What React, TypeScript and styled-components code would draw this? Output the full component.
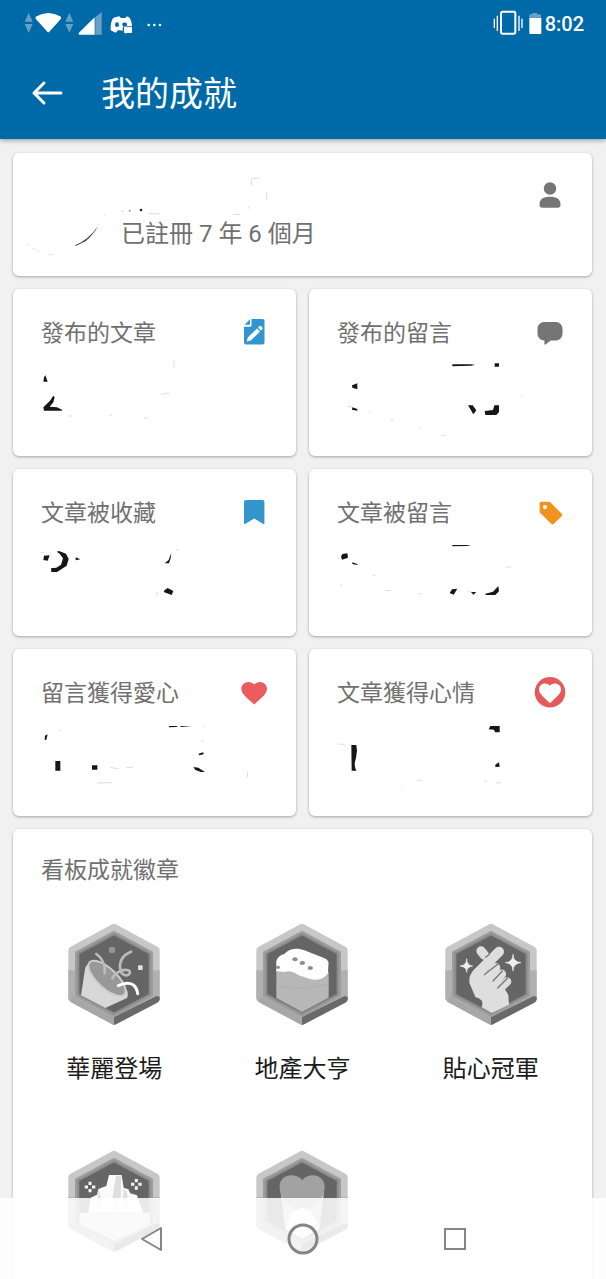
import React from "react";
import styled, { createGlobalStyle } from "styled-components";

const GlobalStyle = createGlobalStyle`
  * { box-sizing: border-box; }
  body {
    margin: 0;
    background: #f1f1f1;
    font-family: "Noto Sans CJK TC", Roboto, sans-serif;
  }
  button { font: inherit; }
`;

const Screen = styled.div`
  position: relative;
  display: flex;
  flex-direction: column;
  height: 100vh;
  overflow: hidden;
  background: #f1f1f1;
`;

const Header = styled.header`
  flex: none;
  color: #fff;
  background: #006aa8;
  box-shadow: 0 1px 5px rgba(0, 0, 0, 0.4);
  z-index: 1;
`;

const StatusBar = styled.div`
  display: flex;
  align-items: center;
  justify-content: space-between;
  height: 48px;
  padding: 0 22px 0 24px;
`;

const StatusGroup = styled.div`
  display: flex;
  align-items: center;
  gap: 3px;
`;

const Clock = styled.time`
  font: 500 20px/24px Roboto, sans-serif;
`;

const Toolbar = styled.div`
  display: flex;
  align-items: center;
  gap: 38px;
  height: 91px;
  padding: 0 32px 0 31px;
`;

const BackButton = styled.button`
  display: flex;
  width: 32px;
  height: 32px;
  padding: 0;
  border: 0;
  color: inherit;
  background: none;
`;

const Title = styled.h1`
  margin: 0;
  padding-bottom: 4px;
  font-size: 34px;
  line-height: 48px;
  font-weight: 400;
`;

const Content = styled.main`
  flex: 1;
  min-height: 0;
  display: flex;
  flex-direction: column;
  gap: 13px;
  padding: 14px 14px 0 13px;
  overflow-y: auto;
  scrollbar-width: none;
`;

const Card = styled.section`
  flex: none;
  border-radius: 6px;
  background: #fff;
  box-shadow: 0 1px 3px rgba(0, 0, 0, 0.32);
`;

const ProfileCard = styled(Card)`
  display: flex;
  align-items: flex-start;
  height: 123px;
  padding: 12px 26px 0 14px;
`;

const ProfileText = styled.div`
  flex: 1;
  margin-left: 12px;
`;

const Caption = styled.h2`
  margin: 0;
  padding-bottom: 2px;
  color: #707070;
  font-size: 23px;
  line-height: 34px;
  font-weight: 400;
  white-space: nowrap;
`;

const ProfileCaption = styled(Caption)`
  font-family: Roboto, "Noto Sans CJK TC", sans-serif;
  font-size: 24px;
`;

const IconSlot = styled.span<{ $color: string }>`
  flex: none;
  display: flex;
  color: ${(p) => p.$color};
`;

const ProfileIcon = styled(IconSlot)`
  padding-top: 14px;
`;

const StatGrid = styled.div`
  flex: none;
  display: grid;
  grid-template-columns: 1fr 1fr;
  gap: 13px;
`;

const StatCard = styled(Card)`
  height: 167px;
  padding: 26px 26px 0 28px;
`;

const StatHead = styled.div`
  display: flex;
  align-items: center;
  justify-content: space-between;
  height: 34px;
  margin-bottom: 6px;
`;

const Drawing = styled.svg`
  display: block;
  flex: none;
`;

const BadgeCard = styled(Card)`
  padding: 22px 7px 120px;
`;

const BadgeTitle = styled(Caption)`
  padding-left: 21px;
`;

const BadgeGrid = styled.ul`
  display: grid;
  grid-template-columns: repeat(3, 1fr);
  row-gap: 66px;
  margin: 36px 0 0;
  padding: 0;
  list-style: none;
`;

const BadgeItem = styled.li`
  display: flex;
  flex-direction: column;
  align-items: center;
  gap: 25px;
  color: #1b1b1b;
  font-size: 24px;
  line-height: 34px;
`;

const NavBar = styled.nav`
  position: absolute;
  inset: auto 0 0;
  z-index: 2;
  display: grid;
  grid-template-columns: repeat(3, 1fr);
  height: 81px;
  padding: 0 12.5%;
  background: rgba(255, 255, 255, 0.86);
`;

const NavButton = styled.button`
  display: flex;
  align-items: center;
  justify-content: center;
  padding: 0;
  border: 0;
  background: none;
`;

const HEART =
  "M12 21.35l-1.45-1.32C5.4 15.36 2 12.28 2 8.5 2 5.42 4.42 3 7.5 3c1.74 0 3.41.81 4.5 2.09C13.09 3.81 14.76 3 16.5 3 19.58 3 22 5.42 22 8.5c0 3.78-3.4 6.86-8.55 11.54z";

const icons = {
  edit: (
    <>
      <path d="M13.5 3H24.5a2 2 0 0 1 2 2V26.5a2 2 0 0 1-2 2H8a2 2 0 0 1-2-2V10.7H12a1.5 1.5 0 0 0 1.5-1.5z" fill="currentColor" />
      <path d="M6.5 8.8 12 3.2V8.8z" fill="currentColor" />
      <path d="M8.8 25.5 9.8 21.6 19 12.4 22 15.4 12.8 24.6zM20 11.4 21.5 10a1 1 0 0 1 1.4 0L24.4 11.5a1 1 0 0 1 0 1.4L23 14.4z" fill="#fff" />
    </>
  ),
  comment: (
    <path d="M10 6H22a6.5 6.5 0 0 1 6.5 6.5V18a6.5 6.5 0 0 1-6.5 6.5H16.8L11.5 28.6a.7.7 0 0 1-1.1-.6V24.5H10A6.5 6.5 0 0 1 3.5 18V12.5A6.5 6.5 0 0 1 10 6z" fill="currentColor" />
  ),
  bookmark: <path d="M8 4H24.4a2 2 0 0 1 2 2V27.5a.7.7 0 0 1-1 .6L16.2 22.6 7 28.1a.7.7 0 0 1-1-.6V6a2 2 0 0 1 2-2z" fill="currentColor" />,
  tag: (
    <path
      d="M7.3 5.8H14.6a3 3 0 0 1 2.2 1L27.5 17.5a2 2 0 0 1 0 2.8L20 27.8a2 2 0 0 1-2.8 0L6.6 17.2a3 3 0 0 1-1-2.2V7.5A1.7 1.7 0 0 1 7.3 5.8zM11 9a2.1 2.1 0 1 0 0 4.2A2.1 2.1 0 0 0 11 9z"
      fillRule="evenodd"
      fill="currentColor"
    />
  ),
  heart: <path d={HEART} transform="translate(.8 2.4) scale(1.28 1.22)" fill="currentColor" />,
  mood: (
    <>
      <circle cx="16" cy="16.2" r="15.3" fill="currentColor" />
      <path d={HEART} transform="translate(2.8 4.2) scale(1.1 1.07)" fill="#fff" />
    </>
  ),
  person: (
    <>
      <circle cx="16" cy="9.5" r="6.2" fill="currentColor" />
      <path d="M5.5 25.5C5.5 20 9.5 17.8 16 17.8S26.5 20 26.5 25.5A3 3 0 0 1 23.5 28.7H8.5a3 3 0 0 1-3-3.2z" fill="currentColor" />
    </>
  ),
};

const Icon = ({ name }: { name: keyof typeof icons }) => (
  <Drawing width="32" height="32" viewBox="0 0 32 32" aria-hidden="true">
    {icons[name]}
  </Drawing>
);

/* Each value is mostly erased: only specks of ink are left. */
type Stat = { label: string; icon: keyof typeof icons; color: string; ink: string; faint: string };

const stats: Stat[] = [
  {
    label: "發布的文章", icon: "edit", color: "#3295cd",
    ink: "M13 61 20 80H7L9 67ZM37 122 41 127 37 142 26 155 48 157 63 164V167H9L7 157 27 137Z",
    faint: "M399 16V38M360 118 384 114M81 183H94M205 181 215 179M310 188 320 189",
  },
  {
    label: "發布的留言", icon: "comment", color: "#757575",
    ink: "M45 91 61 85V103L46 98ZM46 157 61 162V167L45 164ZM346 28H404L414 30 400 32 346 34ZM473 25H486V35H473ZM393 151H407L418 166 409 178ZM443 168 468 165 472 151H486V171L478 180H445Z",
    faint: "M31 153 45 157M96 170 101 174M165 192V200M247 219 253 221M312 240 326 243M553 120V126",
  },
  {
    label: "文章被收藏", icon: "bookmark", color: "#3295cd",
    ink: "M9 62 26 61 20 77 7 75ZM47 50 54 48 75 56 83 72 77 92 61 103 48 111H31L30 100 46 98 60 89 66 70 56 56ZM104 67 118 73 104 76ZM391 53 389 70 384 85H371L383 75ZM371 165 380 159 397 168 392 180 368 171Z",
    faint: "M0 52 10 53M403 47 414 44M348 170V181",
  },
  {
    label: "文章被留言", icon: "tag", color: "#f0921e",
    ink: "M16 57 31 55 33 68 15 74 12 65ZM46 82 61 87V90L46 87ZM346 30H402L390 33 346 34ZM345 163 361 161 350 179 338 174ZM402 171H418L409 179ZM445 176 468 170 484 153 486 169 475 180H446Z",
    faint: "M107 120 115 122M145 166 162 167M10 150 16 150M241 177 253 176M392 170 403 171M506 96 523 96",
  },
  {
    label: "留言獲得愛心", icon: "heart", color: "#ec5b5d",
    ink: "M12 62 20 58 16 74 11 75ZM43 138H58V167H43ZM153 151H169V164H153ZM384 33H411L406 36 384 37ZM417 33H453L420 36ZM473 116 487 112 488 118 474 121ZM457 156 472 158 492 171 480 171 463 165Z",
    faint: "M54 47 60 45M487 33 492 34M481 77 489 80M209 157 225 161 234 161M257 158 278 156M168 204 213 203M620 169V188",
  },
  {
    label: "文章獲得心情", icon: "mood", color: "#e45a5c",
    ink: "M43 90H58L60 107 57 128 53 145 54 157 58 167H44ZM460 33H488V52H474L471 44 455 43ZM475 149 486 142 488 155 475 156Z",
    faint: "M4 87 24 88M190 210V213M240 197 255 195M441 199H450M475 203 492 204",
  },
];

const hex = (inset: number) => {
  const x = inset, r = 276 - inset, t = inset * 1.1, b = 306 - inset * 1.1;
  const u = 76 + inset * 0.5, l = 230 - inset * 0.5;
  return `M138 ${t}L${r} ${u}V${l}L138 ${b}L${x} ${l}V${u}Z`;
};

const Badge = ({ label, children }: { label: string; children: React.ReactNode }) => (
  <Drawing width="92" height="102" viewBox="0 0 276 306" role="img" aria-label={label}>
    <path d={hex(12)} fill="#c7c7c7" stroke="#c7c7c7" strokeWidth="22" strokeLinejoin="round" />
    <path d="M1 142H275V226Q275 232 269 236L144 304Q138 307 132 304L7 236Q1 232 1 226Z" fill="#b0b0b0" />
    <path d="M138 282 266 219 275 222V230Q275 235 268 239L144 304L138 306Z" fill="#696969" />
    <path d="M138 284V306L8 237 15 220Z" fill="#a7a7a7" />
    <path d={hex(21)} fill="#9d9d9d" />
    <path d={hex(28)} fill="#8c8c8c" />
    <path d={hex(34)} fill="#656565" />
    {children}
  </Drawing>
);

const party = (
  <>
    <path d="M51 139Q53 120 77 120L175 199Q183 210 177 225L112 255 39 217Z" fill="#d7d7d7" />
    <ellipse cx="117" cy="166" rx="71" ry="29" transform="rotate(43 117 166)" fill="#989898" stroke="#ccc" strokeWidth="6" />
    <g fill="none" strokeLinecap="round">
      <path d="M85 93Q106 108 110 134V151M189 86C157 99 153 124 158 146 169 165 190 156 185 145 172 133 142 148 133 166" stroke="#bbb" strokeWidth="8" />
      <path d="M151 188Q178 175 196 186 207 195 209 212" stroke="#fff" strokeWidth="9" />
    </g>
    <circle cx="132" cy="81" r="10" fill="#969696" />
    <rect x="210" y="127" width="14" height="14" rx="3" fill="#e2e2e2" />
  </>
);

const bread = (
  <>
    <path d="M61 138 218 147V224L138 267 61 225Z" fill="#b7b7b7" />
    <path d="M61 190 138 196 217 184" fill="none" stroke="#b1b1b1" strokeWidth="3" />
    <path d="M61 115Q65 98 85 93C98 77 125 73 145 82L204 105Q222 112 217 129L216 151Q198 177 162 168L128 157Q104 140 86 147L61 145Z" fill="#fff" />
    <g fill="#8d8d8d">
      <ellipse cx="117" cy="109" rx="8" ry="6" />
      <ellipse cx="139" cy="120" rx="8" ry="6" />
      <ellipse cx="163" cy="135" rx="8" ry="6" />
      <ellipse cx="66" cy="133" rx="6" ry="5" />
    </g>
  </>
);

const fingerHeart = (
  <>
    <g stroke="#dedede" strokeLinecap="round">
      <path d="M108 84 118 96" strokeWidth="28" />
      <path d="M162 86 98 150" strokeWidth="30" />
      <path d="M152 134 119 175" strokeWidth="28" />
      <path d="M170 153 138 189" strokeWidth="27" />
      <path d="M186 176 155 205" strokeWidth="26" />
    </g>
    <path d="M87 140Q71 155 73 179L91 222Q119 228 110 253L140 270 192 245 190 216 171 184 130 144Z" fill="#dedede" />
    <path d="M160 122 128 147 118 155M172 144 144 174M188 165 158 195M122 103 133 94" stroke="#777" strokeWidth="4" strokeLinecap="round" fill="none" />
    <path d="M65 107Q65 127 83 129 65 131 65 148 65 131 45 129 65 127 65 107ZM204 94Q204 117 228 119 204 121 204 144 204 121 181 119 204 117 204 94Z" fill="#eee" stroke="#eee" strokeWidth="2" />
  </>
);

const crystal = (
  <>
    <path d="M34 188H246V225L138 272 34 221Z" fill="#ddd" />
    <path d="M61 188 68 143 87 134 91 117 115 108 123 75H161L167 113 181 118 187 130 207 136 216 161 225 188Z" fill="#fafafa" />
    <path d="M144 77 133 145 140 188 158 140 160 77ZM167 113 165 145 178 188V130ZM91 118 86 188 100 150Z" fill="#dedede" />
    {[[66, 111], [205, 103]].map(([x, y]) => (
      <g key={x} fill="none" stroke="#f4f4f4">
        <path d={`M${x} ${y - 16}V${y - 6}M${x} ${y + 6}V${y + 16}M${x - 16} ${y}H${x - 6}M${x + 6} ${y}H${x + 16}`} strokeWidth="9" />
      </g>
    ))}
  </>
);

const heartBeam = (
  <>
    <path d="M74 125 88 238 138 266 190 238 204 125Z" fill="#c8c8c8" />
    <path d="M139 91C122 68 74 70 71 107 70 140 87 163 138 190 187 163 207 140 206 107 201 70 155 68 139 91Z" fill="#a2a2a2" />
    <path d="M106 188 138 171 170 188 190 238 138 266 88 238Z" fill="#f3f3f3" />
  </>
);

const badges: { label: string; caption?: string; art: React.ReactNode }[] = [
  { label: "華麗登場", caption: "華麗登場", art: party },
  { label: "地產大亨", caption: "地產大亨", art: bread },
  { label: "貼心冠軍", caption: "貼心冠軍", art: fingerHeart },
  { label: "水晶", art: crystal },
  { label: "愛心", art: heartBeam },
];

export default function App() {
  return (
    <Screen>
      <GlobalStyle />
      <Header>
        <StatusBar>
          <Drawing width="140" height="28" viewBox="0 12 420 84" aria-hidden="true">
            <g fill="#6a9fc5">
              <path d="M14 21 26 47H2ZM2 54H26L14 80ZM136 21 148 47H124ZM124 54H148L136 80Z" />
              <path d="M214 34 233 18V86H214Z" />
            </g>
            <path d="M35 32Q73 10 111 32V38L76 77Q73 80 70 77L35 38ZM164 84V81L212 34V86H166Z" fill="#fff" />
            <path d="M273 34 286 31 291 36H304L309 31 317 35Q324 47 324 60H304Q297 60 296 67V75L289 73H282L275 80 260 73Q259 48 267 37ZM279 49A6 7 0 1 0 279 63 6 7 0 1 0 279 49ZM302 50A5 6 0 1 0 302 61 5 6 0 1 0 302 50Z" fill="#fff" fillRule="evenodd" />
            <rect x="300" y="62" width="24" height="19" rx="2" fill="#fff" />
            <path d="M302 78H310L306 84Z" fill="#fff" />
            <g fill="#fff">
              <circle cx="374" cy="57" r="4" />
              <circle cx="391" cy="57" r="4" />
              <circle cx="408" cy="57" r="4" />
            </g>
          </Drawing>
          <StatusGroup>
            <Drawing width="50" height="30" viewBox="0 0 150 90" aria-hidden="true">
              <rect x="27" y="8" width="43" height="66" rx="5" fill="none" stroke="#fff" strokeWidth="6" />
              <path d="M7 29V57M16 20V66M81 20V66M90 29V57" stroke="#fff" strokeWidth="4" />
              <path d="M112 28V19Q112 16 115 16H121V12H135V16H143Q147 16 147 19V28Z" fill="#6a9fc5" />
              <path d="M112 27H148V72Q148 75 145 75H115Q112 75 112 72Z" fill="#fff" />
            </Drawing>
            <Clock>8:02</Clock>
          </StatusGroup>
        </StatusBar>
        <Toolbar>
          <BackButton aria-label="返回">
            <Drawing width="32" height="32" viewBox="0 0 32 32" aria-hidden="true">
              <path d="M30 15H3M13 5 3 15 13 25" fill="none" stroke="currentColor" strokeWidth="3" strokeLinecap="round" strokeLinejoin="round" />
            </Drawing>
          </BackButton>
          <Title>我的成就</Title>
        </Toolbar>
      </Header>

      <Content>
        <ProfileCard>
          <Drawing width="82" height="92" viewBox="0 0 246 276" aria-hidden="true">
            <path d="M213 184Q199 210 175 229L144 244 146 240Q184 225 213 184Z" fill="#333" />
            <path d="M0 236 10 243M15 249 25 251M31 257 38 259M61 268 82 270M213 184 217 175M231 149 236 152" stroke="#ddd" strokeWidth="2" fill="none" />
          </Drawing>
          <ProfileText>
            <Drawing width="160" height="52" viewBox="0 0 480 156" aria-hidden="true">
              <path d="M391 62V41L415 39M437 81V104M383 125V131M337 148H357M0 139H9M82 145 117 147" stroke="#ccc" strokeWidth="2" fill="none" />
              <circle cx="60" cy="135" r="4" fill="#222" />
              <circle cx="26" cy="137" r="3" fill="#999" />
            </Drawing>
            <ProfileCaption>已註冊 7 年 6 個月</ProfileCaption>
          </ProfileText>
          <ProfileIcon $color="#757575">
            <Icon name="person" />
          </ProfileIcon>
        </ProfileCard>

        <StatGrid>
          {stats.map((s) => (
            <StatCard key={s.label}>
              <StatHead>
                <Caption>{s.label}</Caption>
                <IconSlot $color={s.color}>
                  <Icon name={s.icon} />
                </IconSlot>
              </StatHead>
              <Drawing width="220" height="90" viewBox="0 0 660 270" aria-hidden="true">
                <path d={s.faint} fill="none" stroke="#ccc" strokeWidth="2" />
                <path d={s.ink} fill="#161616" />
              </Drawing>
            </StatCard>
          ))}
        </StatGrid>

        <BadgeCard>
          <BadgeTitle>看板成就徽章</BadgeTitle>
          <BadgeGrid>
            {badges.map((b) => (
              <BadgeItem key={b.label}>
                <Badge label={b.label}>{b.art}</Badge>
                {b.caption && <span>{b.caption}</span>}
              </BadgeItem>
            ))}
          </BadgeGrid>
        </BadgeCard>
      </Content>

      <NavBar>
        <NavButton aria-label="返回上一頁">
          <Drawing width="24" height="28" viewBox="0 0 24 28" aria-hidden="true">
            <path d="M21 3V25L2 14Z" fill="none" stroke="#858585" strokeWidth="2" strokeLinejoin="round" />
          </Drawing>
        </NavButton>
        <NavButton aria-label="主畫面">
          <Drawing width="32" height="32" viewBox="0 0 32 32" aria-hidden="true">
            <circle cx="16" cy="16" r="14" fill="none" stroke="#858585" strokeWidth="3" />
          </Drawing>
        </NavButton>
        <NavButton aria-label="最近使用">
          <Drawing width="24" height="24" viewBox="0 0 24 24" aria-hidden="true">
            <rect x="2" y="2" width="20" height="20" fill="none" stroke="#858585" strokeWidth="2" />
          </Drawing>
        </NavButton>
      </NavBar>
    </Screen>
  );
}
